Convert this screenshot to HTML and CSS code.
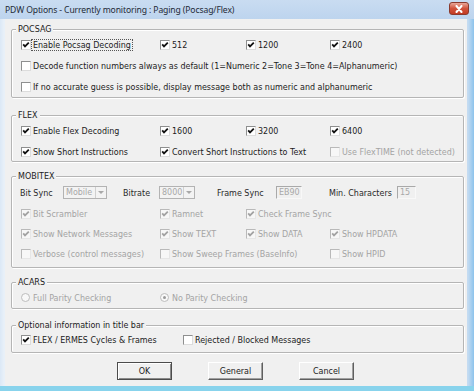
FILE: index.html
```html
<!DOCTYPE html>
<html>
<head>
<meta charset="utf-8">
<link rel="stylesheet" href="styles.css">
</head>
<body>
<div class="window">
  <div class="capbar">
    <span class="captxt">PDW Options - Currently monitoring : Paging (Pocsag/Flex)</span>
    <span class="xbtn"><svg viewBox="0 0 10 8" width="10" height="8"><path d="M2.5 1 L7.5 7 M7.5 1 L2.5 7" stroke="#fff" stroke-width="2" stroke-linecap="round"/></svg></span>
  </div>
  <div class="client">

    <div class="group g-pocsag">
      <span class="legend">POCSAG</span>
      <div class="grid row">
        <label class="chk"><span class="cb"><svg viewBox="0 0 8 8"><path d="M1.2 3.4 L3 5.4 L6.8 1.6" /></svg></span><span class="focus">Enable Pocsag Decoding</span></label>
        <label class="chk"><span class="cb"><svg viewBox="0 0 8 8"><path d="M1.2 3.4 L3 5.4 L6.8 1.6" /></svg></span>512</label>
        <label class="chk"><span class="cb"><svg viewBox="0 0 8 8"><path d="M1.2 3.4 L3 5.4 L6.8 1.6" /></svg></span>1200</label>
        <label class="chk"><span class="cb"><svg viewBox="0 0 8 8"><path d="M1.2 3.4 L3 5.4 L6.8 1.6" /></svg></span>2400</label>
      </div>
      <div class="row">
        <label class="chk"><span class="cb"></span>Decode function numbers always as default (1=Numeric 2=Tone 3=Tone 4=Alphanumeric)</label>
      </div>
      <div class="row">
        <label class="chk"><span class="cb"></span>If no accurate guess is possible, display message both as numeric and alphanumeric</label>
      </div>
    </div>

    <div class="group g-flex">
      <span class="legend">FLEX</span>
      <div class="grid row">
        <label class="chk"><span class="cb"><svg viewBox="0 0 8 8"><path d="M1.2 3.4 L3 5.4 L6.8 1.6" /></svg></span>Enable Flex Decoding</label>
        <label class="chk"><span class="cb"><svg viewBox="0 0 8 8"><path d="M1.2 3.4 L3 5.4 L6.8 1.6" /></svg></span>1600</label>
        <label class="chk"><span class="cb"><svg viewBox="0 0 8 8"><path d="M1.2 3.4 L3 5.4 L6.8 1.6" /></svg></span>3200</label>
        <label class="chk"><span class="cb"><svg viewBox="0 0 8 8"><path d="M1.2 3.4 L3 5.4 L6.8 1.6" /></svg></span>6400</label>
      </div>
      <div class="grid row">
        <label class="chk"><span class="cb"><svg viewBox="0 0 8 8"><path d="M1.2 3.4 L3 5.4 L6.8 1.6" /></svg></span>Show Short Instructions</label>
        <label class="chk span2"><span class="cb"><svg viewBox="0 0 8 8"><path d="M1.2 3.4 L3 5.4 L6.8 1.6" /></svg></span>Convert Short Instructions to Text</label>
        <label class="chk dis"><span class="cb"></span>Use FlexTIME (not detected)</label>
      </div>
    </div>

    <div class="group g-mobitex">
      <span class="legend">MOBITEX</span>
      <div class="row first mobirow">
        <span class="lbl l-bitsync">Bit Sync</span>
        <span class="combo c-mobile"><span class="cval">Mobile</span><span class="cbtn"></span></span>
        <span class="lbl l-bitrate">Bitrate</span>
        <span class="combo c-rate"><span class="cval">8000</span><span class="cbtn"></span></span>
        <span class="lbl l-frame">Frame Sync</span>
        <span class="edit e-frame">EB90</span>
        <span class="lbl l-min">Min. Characters</span>
        <span class="edit e-min">15</span>
      </div>
      <div class="grid row r20">
        <label class="chk dis"><span class="cb"><svg viewBox="0 0 8 8"><path d="M1.2 3.4 L3 5.4 L6.8 1.6" /></svg></span>Bit Scrambler</label>
        <label class="chk dis"><span class="cb"><svg viewBox="0 0 8 8"><path d="M1.2 3.4 L3 5.4 L6.8 1.6" /></svg></span>Ramnet</label>
        <label class="chk dis"><span class="cb"><svg viewBox="0 0 8 8"><path d="M1.2 3.4 L3 5.4 L6.8 1.6" /></svg></span>Check Frame Sync</label>
      </div>
      <div class="grid row r20">
        <label class="chk dis"><span class="cb"><svg viewBox="0 0 8 8"><path d="M1.2 3.4 L3 5.4 L6.8 1.6" /></svg></span>Show Network Messages</label>
        <label class="chk dis"><span class="cb"><svg viewBox="0 0 8 8"><path d="M1.2 3.4 L3 5.4 L6.8 1.6" /></svg></span>Show TEXT</label>
        <label class="chk dis"><span class="cb"><svg viewBox="0 0 8 8"><path d="M1.2 3.4 L3 5.4 L6.8 1.6" /></svg></span>Show DATA</label>
        <label class="chk dis"><span class="cb"><svg viewBox="0 0 8 8"><path d="M1.2 3.4 L3 5.4 L6.8 1.6" /></svg></span>Show HPDATA</label>
      </div>
      <div class="grid row r20">
        <label class="chk dis"><span class="cb"></span>Verbose (control messages)</label>
        <label class="chk dis span2"><span class="cb"></span>Show Sweep Frames (BaseInfo)</label>
        <label class="chk dis"><span class="cb"></span>Show HPID</label>
      </div>
    </div>

    <div class="group g-acars">
      <span class="legend">ACARS</span>
      <div class="grid row">
        <label class="chk dis"><span class="rb"></span>Full Parity Checking</label>
        <label class="chk dis span2"><span class="rb on"></span>No Parity Checking</label>
      </div>
    </div>

    <div class="group g-opt">
      <span class="legend">Optional information in title bar</span>
      <div class="row optrow">
        <label class="chk o1"><span class="cb"><svg viewBox="0 0 8 8"><path d="M1.2 3.4 L3 5.4 L6.8 1.6" /></svg></span>FLEX / ERMES Cycles &amp; Frames</label>
        <label class="chk"><span class="cb"></span>Rejected / Blocked Messages</label>
      </div>
    </div>

    <div class="buttons">
      <span class="btn default">OK</span>
      <span class="btn">General</span>
      <span class="btn">Cancel</span>
    </div>
  </div>
</div>
</body>
</html>
```

FILE: styles.css
```css
html, body {
  margin: 0;
  padding: 0;
  background: #bcd6f0;
}
.window {
  width: 474px;
  height: 391px;
  box-sizing: border-box;
  background: linear-gradient(to right, #dbe8f6 0, #e8f0f8 4px, #c4dbf1 468px, #8cc3ec 474px);
  border-bottom: 5px solid #88d3ec;
  overflow: hidden;
  font-family: "DejaVu Sans Condensed", "DejaVu Sans", sans-serif;
  font-size: 8.9px;
  color: #1c1c1c;
  text-align: left;
}
.capbar {
  height: 19px;
  display: grid;
  grid-template-columns: 1fr 20px;
  align-items: center;
  padding-left: 5px;
  padding-right: 5px;
  box-sizing: border-box;
  background: linear-gradient(to bottom, #c9dcf1, #bdd4ee);
}
.captxt {
  justify-self: start;
  font-family: "Noto Sans", "Open Sans", sans-serif;
  font-size: 8.6px;
  color: #1e2a36;
  letter-spacing: -0.12px;
  white-space: nowrap;
}
.xbtn {
  width: 20px;
  height: 13px;
  margin-top: -2px;
  box-sizing: border-box;
  border-radius: 3px;
  border: 1px solid #8a3a2e;
  background: linear-gradient(to bottom, #e9a799 0, #d1533c 50%, #c33a22 100%);
  display: flex;
  align-items: center;
  justify-content: center;
}
.xbtn svg { display: block; }
.client {
  margin-left: 5px;
  width: 462px;
  height: 367px;
  background: #f0f0f0;
  overflow: hidden;
  padding-top: 10px;
  box-sizing: border-box;
}
.group {
  position: relative;
  margin-left: 6px;
  width: 453px;
  box-sizing: border-box;
  border: 1px solid #b5b5b5;
  border-radius: 2px;
  box-shadow: inset 1px 1px 0 #fff, 1px 1px 0 #fff;
  padding: 4px 0 0 9px;
}
.legend {
  position: absolute;
  top: -6px;
  left: 4px;
  padding: 0 2px;
  line-height: 11px;
  background: #f0f0f0;
  color: #1c1c1c;
}
.g-pocsag { height: 69px; }
.g-flex { height: 47px; margin-top: 17px; }
.g-mobitex { height: 92px; margin-top: 14px; }
.g-acars { height: 27px; margin-top: 14px; }
.g-opt { height: 28px; margin-top: 16px; padding-top: 3px; }

.row {
  height: 21px;
  display: flex;
  align-items: center;
}
.row.r20 { height: 20px; }
.row.first { height: 23px; }
.grid {
  display: grid;
  grid-template-columns: 139px 86px 84px 1fr;
  align-items: center;
}
.span2 { grid-column: span 2; }

.chk {
  display: flex;
  align-items: center;
  white-space: nowrap;
  color: #1c1c1c;
}
.cb {
  flex: none;
  width: 10px;
  height: 10px;
  box-sizing: border-box;
  border: 1px solid;
  border-color: #8e8f8f #dcdcdc #dcdcdc #8e8f8f;
  background: #fff;
  margin-right: 2px;
  display: flex;
  align-items: center;
  justify-content: center;
}
.cb svg {
  width: 8px;
  height: 8px;
  display: block;
}
.cb svg path {
  fill: none;
  stroke: #111;
  stroke-width: 1.8;
}
.focus {
  outline: 1px dotted #555;
  outline-offset: 0;
  padding: 0 1px;
  margin-left: -1px;
}
.chk.dis { color: #a4a4a4; }
.chk.dis .cb {
  border-color: #b9b9b9 #e6e6e6 #e6e6e6 #b9b9b9;
  background: #f7f7f7;
}
.chk.dis .cb svg path { stroke: #a2a2a2; }

.rb {
  flex: none;
  width: 9px;
  height: 9px;
  box-sizing: border-box;
  border-radius: 50%;
  border: 1px solid #bdbdbd;
  background: #f8f8f8;
  margin-right: 3px;
  display: flex;
  align-items: center;
  justify-content: center;
}
.rb.on::after {
  content: "";
  width: 3px;
  height: 3px;
  border-radius: 50%;
  background: #9a9a9a;
}

.mobirow { margin-left: -1px; }
.lbl { white-space: nowrap; color: #2a2a2a; }
.l-bitsync { width: 43px; }
.l-bitrate { width: 36px; margin-left: 16px; }
.l-frame { width: 59px; margin-left: 22px; }
.l-min { width: 68px; margin-left: 27px; }
.combo {
  display: flex;
  height: 13px;
  box-sizing: border-box;
  border: 1px solid #b3b3b3;
  background: #f3f3f3;
  color: #a8a8a8;
}
.c-mobile { width: 44px; }
.c-rate { width: 36px; }
.cval {
  flex: 1;
  line-height: 11px;
  padding-left: 2px;
  overflow: hidden;
}
.cbtn {
  width: 10px;
  border-left: 1px solid #d0d0d0;
  display: flex;
  align-items: center;
  justify-content: center;
}
.cbtn::after {
  content: "";
  border-left: 3px solid transparent;
  border-right: 3px solid transparent;
  border-top: 3px solid #a8a8a8;
}
.edit {
  height: 13px;
  box-sizing: border-box;
  border: 1px solid;
  border-color: #a9a9a9 #f8f8f8 #f8f8f8 #a9a9a9;
  background: #f0f0f0;
  color: #a8a8a8;
  line-height: 11px;
  padding-left: 2px;
}
.e-frame { width: 26px; }
.e-min { width: 19px; }

.optrow .o1 { width: 162px; }

.buttons {
  margin-top: 9px;
  display: flex;
  justify-content: center;
  gap: 36px;
  padding-right: 1px;
}
.btn {
  width: 55px;
  height: 18px;
  box-sizing: border-box;
  display: flex;
  align-items: center;
  justify-content: center;
  background: #f0f0f0;
  border: 1px solid;
  border-color: #fff #5f5f5f #5f5f5f #fff;
  box-shadow: inset -1px -1px 0 #a0a0a0;
  color: #1c1c1c;
}
.btn.default {
  border-color: #4c4c4c;
  box-shadow: inset 1px 1px 0 #fff, inset -1px -1px 0 #8a8a8a;
}
```
